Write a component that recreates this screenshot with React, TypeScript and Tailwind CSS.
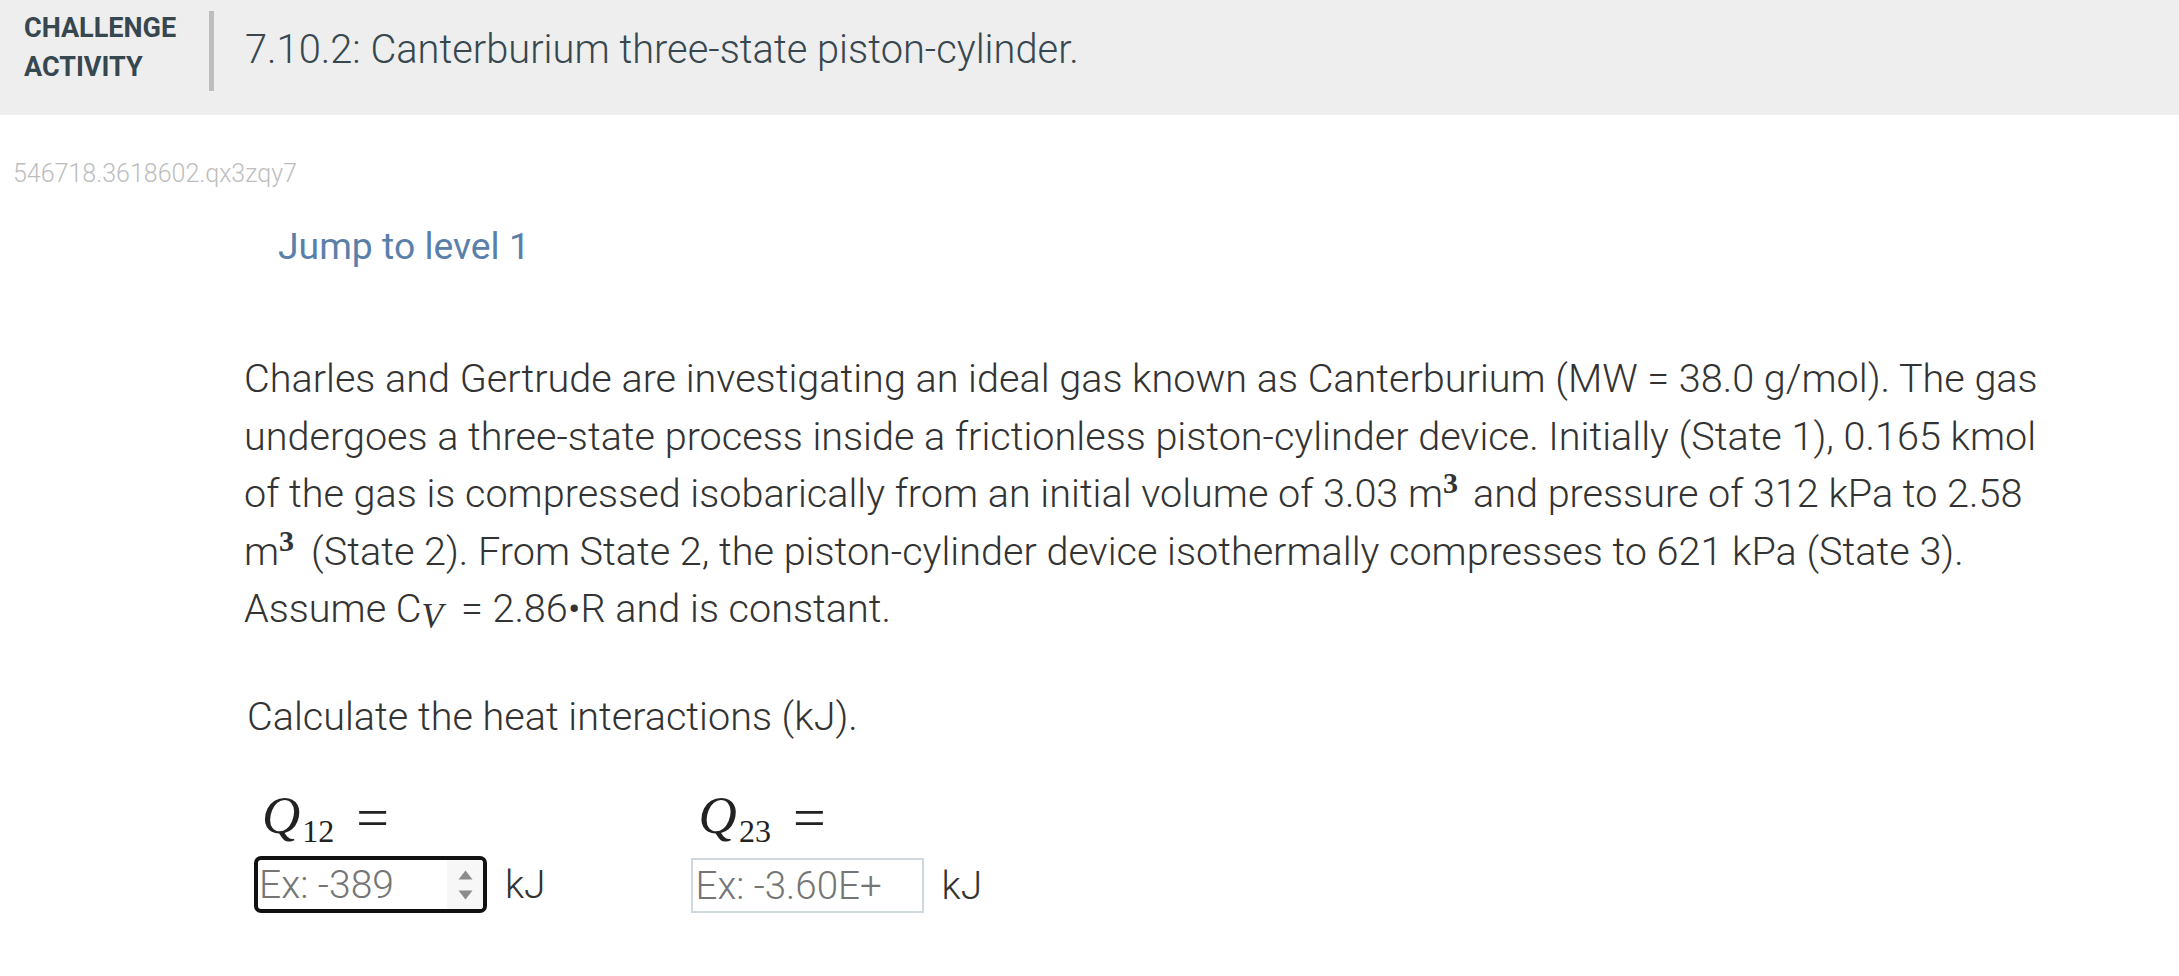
import { useState } from "react";

function Spinner() {
  return (
    <div className="flex h-full w-[36px] flex-col items-center justify-center gap-[10px] bg-[#f7f7f7]">
      <svg width="15" height="10" viewBox="0 0 15 10">
        <path d="M7.5 0.5 L14.5 9.5 L0.5 9.5 Z" fill="#8c8c8c" />
      </svg>
      <svg width="15" height="10" viewBox="0 0 15 10">
        <path d="M0.5 0.5 L14.5 0.5 L7.5 9.5 Z" fill="#8c8c8c" />
      </svg>
    </div>
  );
}

function MathLabel({ sub }: { sub: string }) {
  return (
    <div className="h-[56px] whitespace-nowrap pl-[8px] font-['Liberation_Serif',serif] text-[53px] leading-[56px] text-[#222]">
      <span className="italic">Q</span>
      <span className="ml-[2px] inline-block align-[-9px] text-[32px] leading-none">{sub}</span>
      <span className="ml-[22px] inline-block align-[-4px] text-[58px] leading-none">=</span>
    </div>
  );
}

function Sup() {
  return (
    <span className="inline-block align-[14px] font-['Liberation_Serif',serif] text-[30px] font-bold leading-none">
      3
    </span>
  );
}

export default function App() {
  const [q12, setQ12] = useState("");
  const [q23, setQ23] = useState("");

  return (
    <div className="min-h-screen bg-white font-['Roboto',sans-serif]">
      {/* Header */}
      <div className="flex h-[115px] items-start bg-[#eeeeee]">
        <div className="w-[209px] pl-[24px] pt-[9px] text-[27px] font-bold leading-[39px] text-[#37474f]">
          CHALLENGE
          <br />
          ACTIVITY
        </div>
        <div className="mt-[11px] h-[80px] w-[5px] bg-[#bdbdbd]" />
        <h1 className="pl-[31px] pt-[30px] text-[39.8px] font-light leading-none text-[#37474f]">
          7.10.2: Canterburium three-state piston-cylinder.
        </h1>
      </div>

      {/* Activity id */}
      <div className="mt-[47px] pl-[13px] text-[25px] font-light leading-[24px] text-[#bdbdbd]">
        546718.3618602.qx3zqy7
      </div>

      {/* Level jump */}
      <div className="mt-[42px] pl-[278px]">
        <button type="button" className="cursor-pointer text-[37.3px] leading-[36px] text-[#5a80aa]">
          Jump to level 1
        </button>
      </div>

      {/* Question */}
      <p className="ml-[244px] mt-[84px] w-[1920px] text-[39.6px] font-light leading-[57.6px] text-[#333]">
        Charles and Gertrude are investigating an ideal gas known as Canterburium (MW = 38.0 g/mol). The gas
        <br />
        undergoes a three-state process inside a frictionless piston-cylinder device. Initially (State 1), 0.165 kmol
        <br />
        of the gas is compressed isobarically from an initial volume of 3.03 m<Sup />
        <span className="ml-[15px]">and pressure of 312 kPa to 2.58</span>
        <br />
        m<Sup />
        <span className="ml-[17px]">(State 2). From State 2, the piston-cylinder device isothermally compresses to 621 kPa (State 3).</span>
        <br />
        Assume C
        <span className="inline-block align-[-6px] font-['Liberation_Serif',serif] text-[35px] italic leading-none">V</span>
        <span className="ml-[18px]">= 2.86•R and is constant.</span>
      </p>

      <p className="mt-[50px] pl-[247px] text-[39.6px] font-light leading-[57.6px] text-[#333]">
        Calculate the heat interactions (kJ).
      </p>

      {/* Answers */}
      <div className="mt-[41px] flex gap-[145px] pl-[254px]">
        <div>
          <MathLabel sub="12" />
          <div className="mt-[13px] flex items-center gap-[18px]">
            <div className="flex h-[57px] w-[233px] items-stretch overflow-hidden rounded-[7px] border-[4px] border-[#111] bg-white">
              <input
                type="text"
                value={q12}
                onChange={(e) => setQ12(e.target.value)}
                placeholder="Ex: -389"
                className="w-0 flex-1 bg-transparent pl-[1px] text-[39px] font-light text-[#333] outline-none placeholder:text-[#757575]"
              />
              <Spinner />
            </div>
            <span className="text-[39px] font-light text-[#333]">kJ</span>
          </div>
        </div>

        <div>
          <MathLabel sub="23" />
          <div className="mt-[14px] flex items-center gap-[18px]">
            <input
              type="text"
              value={q23}
              onChange={(e) => setQ23(e.target.value)}
              placeholder="Ex: -3.60E+"
              className="h-[55px] w-[233px] border-2 border-[#cfd8dc] bg-white pl-[3px] text-[38.5px] font-light text-[#333] outline-none placeholder:text-[#757575]"
            />
            <span className="text-[39px] font-light text-[#333]">kJ</span>
          </div>
        </div>
      </div>
    </div>
  );
}
